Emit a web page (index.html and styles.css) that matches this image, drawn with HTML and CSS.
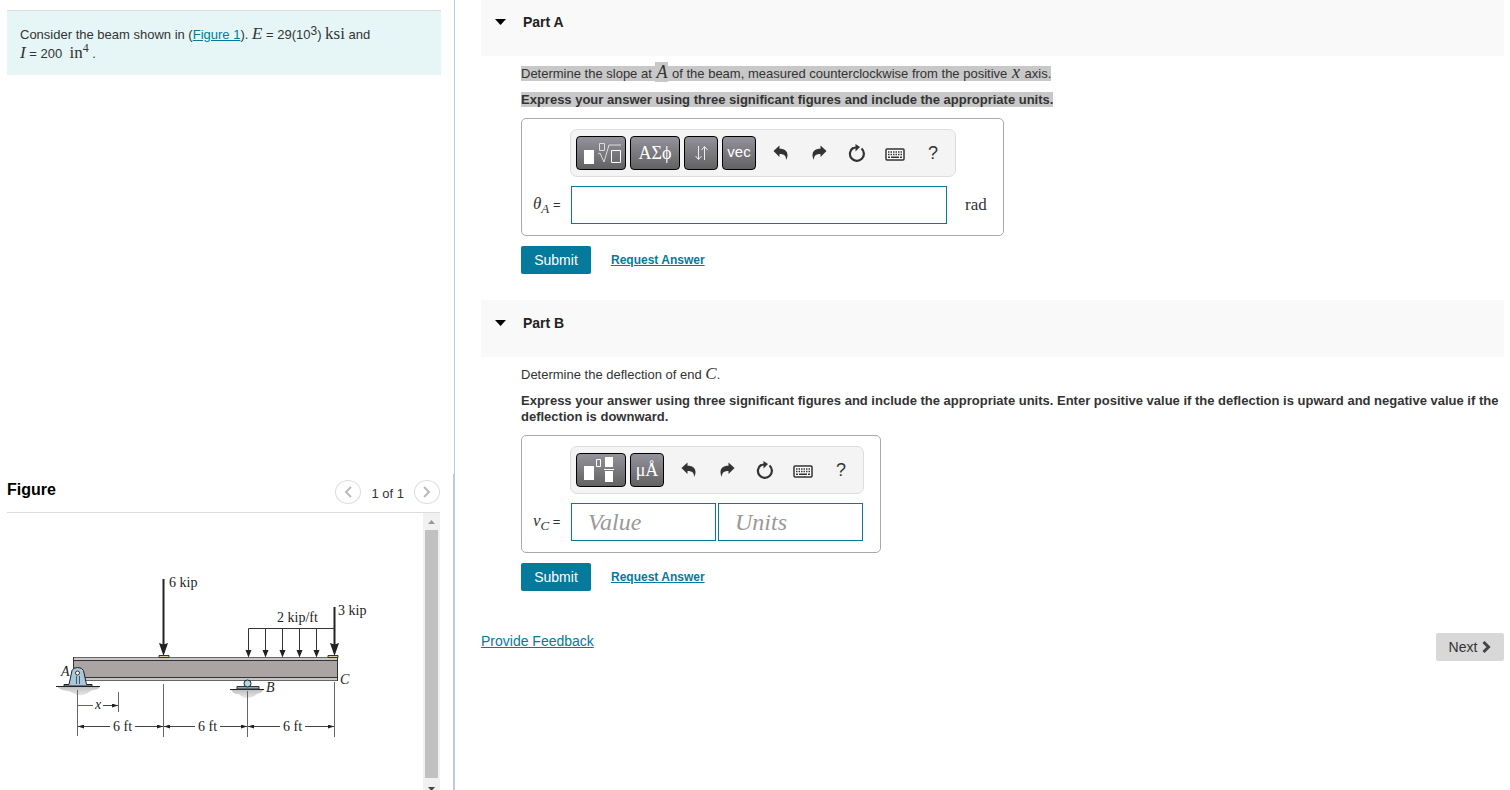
FILE: index.html
```html
<!DOCTYPE html>
<html lang="en">
<head>
  <meta charset="UTF-8">
  <meta name="viewport" content="width=device-width, initial-scale=1.0">
  <title>Beam slope and deflection</title>
  <link rel="stylesheet" href="styles.css">
</head>
<body>
  <!-- shared icons -->
  <svg class="sprite" aria-hidden="true">
    <symbol id="undo" viewBox="0 0 16 16">
      <path d="M.5 6 6.500.5v3.300c5.500 0 8 2.700 8 6.200 0 2-.6 3.500-1.500 5 .2-4-1.500-6-6.500-6v3z"/>
    </symbol>
    <symbol id="redo" viewBox="0 0 16 16">
      <path d="M15.500 6 9.500.5v3.300c-5.500 0-8 2.700-8 6.200 0 2 .6 3.500 1.500 5-.2-4 1.500-6 6.500-6v3z"/>
    </symbol>
    <symbol id="reset" viewBox="0 0 18 18">
      <path d="M13.500 4.500A7 7 0 1 1 5 4" fill="none" stroke="currentColor" stroke-width="2.200"/>
      <path d="M7.500 0 12 3 7.500 7.500V4.500L4.500 5.500 4 3.500 7.500 2.500z"/>
    </symbol>
    <symbol id="keyboard" viewBox="0 0 20 13">
      <rect x="1" y="1" width="18" height="11" rx="1" fill="#fff" stroke="currentColor" stroke-width="1.500"/>
      <path d="M3 4h14M3 6.500h14" fill="none" stroke="currentColor" stroke-width="1.500" stroke-dasharray="1.500 1"/>
      <path d="M3 9.300h2m1 0h8m1 0h2" fill="none" stroke="currentColor" stroke-width="1.500"/>
    </symbol>
  </svg>

  <div class="page">
    <aside class="sidebar">
      <div class="problem-pane">
        <div class="problem">
          Consider the beam shown in (<a href="#figure">Figure 1</a>). <i class="math">E</i> = 29(10<sup>3</sup>) <span class="math">ksi</span> and
          <br><i class="math">I</i> = 200 &nbsp;<span class="math">in<sup>4</sup></span> .
        </div>
      </div>
      <section class="figure-pane" id="figure">
        <div class="figure-header">
          <h2>Figure</h2>
          <div class="pager">
            <button type="button" aria-label="Previous figure"><svg width="8" height="12" viewBox="0 0 8 12"><path d="M7 1 2 6l5 5"/></svg></button>
            <span>1 of 1</span>
            <button type="button" aria-label="Next figure"><svg width="8" height="12" viewBox="0 0 8 12"><path d="m1 1 5 5-5 5"/></svg></button>
          </div>
        </div>
        <div class="figure-body">
          <div class="figure-view">
            <svg class="beam" width="330" height="190" viewBox="50 560 330 190" role="img" aria-label="Beam loading diagram">
              <defs>
                <marker id="tip" viewBox="0 0 6 4" markerWidth="6" markerHeight="4" refX="6" refY="2" orient="auto-start-reverse" markerUnits="userSpaceOnUse">
                  <path d="M0 0 6 2 0 4z"/>
                </marker>
                <linearGradient id="soil" x1="0" y1="0" x2="0" y2="1">
                  <stop offset="0" stop-color="#bbb"/>
                  <stop offset="1" stop-color="#e8e8e8"/>
                </linearGradient>
              </defs>

              <!-- ground under the supports -->
              <path d="M57 686h43c-1 3-4 4-7 4-4 1-5 4-10 5-5 1-8-1-12-3-5-2-11-1-14-6z" fill="url(#soil)"/>
              <path d="M231 689h33c-1 3-4 4-7 5-3 2-5 4-10 4s-6-3-9-4c-4 0-6-2-7-5z" fill="url(#soil)"/>
              <path d="M56 686.500h44M230 689.500h34" stroke="#222"/>

              <!-- beam -->
              <rect x="73" y="657" width="265" height="24" fill="#aaa4a5"/>
              <rect x="73" y="657" width="265" height="3" fill="#c8c6c7"/>
              <rect x="73" y="678" width="265" height="3" fill="#c8c6c7"/>
              <path d="M73 657.500h265M73 680.500h265" stroke="#666"/>
              <path d="M73 660.500h265M73 677.500h265M73.500 657v24M337.500 657v24" stroke="#333"/>

              <!-- pin A -->
              <path d="M64 686v-1.500h5l3-14q1-3 5.500-3t6 3l3 14H92v1.500z" fill="#a9c8dc" stroke="#222"/>
              <circle cx="77.500" cy="673" r="2" fill="#fff" stroke="#333"/>
              <path d="M76.500 676v8M79.500 676v8" stroke="#456"/>

              <!-- roller B -->
              <path d="M237 689v-2.500h22v2.500z" fill="#8ea5b3" stroke="#333"/>
              <circle cx="247.500" cy="683.500" r="3.500" fill="#b5d7ea" stroke="#222"/>

              <!-- point loads -->
              <path d="M159 655.500h10v2h-10zM328 655.500h10v2h-10z" fill="#d9d08f" stroke="#333"/>
              <path d="M163.500 579v66M334.500 607v38" stroke="#222" stroke-width="2"/>
              <path d="m159 643 4.500 1.500L168 643l-4.500 13zM330 643l4.500 1.500L339 643l-4.500 13z"/>

              <!-- distributed load -->
              <path d="M248.500 653v-24.500h86M265.500 629v24M282.500 629v24M299.500 629v24M316.500 629v24" fill="none" stroke="#333"/>
              <path d="m245.500 650 3 7.500 3-7.500zm17 0 3 7.500 3-7.500zm17 0 3 7.500 3-7.500zm17 0 3 7.500 3-7.500zm17 0 3 7.500 3-7.500z"/>

              <!-- dimensions -->
              <path d="M77.500 690v46M163.500 684v53M247.500 691v46M334.500 682v55M118.500 692v20M78 705.500h15" stroke="#666"/>
              <g stroke="#444">
                <path d="M103 705.500h15" marker-end="url(#tip)"/>
                <path d="M110 726.500H78" marker-end="url(#tip)"/>
                <path d="M135 726.500h28" marker-end="url(#tip)"/>
                <path d="M195 726.500h-31" marker-end="url(#tip)"/>
                <path d="M220 726.500h27" marker-end="url(#tip)"/>
                <path d="M280 726.500h-32" marker-end="url(#tip)"/>
                <path d="M305 726.500h29" marker-end="url(#tip)"/>
              </g>
              <text x="169" y="587">6 kip</text>
              <text x="277" y="622">2 kip/ft</text>
              <text x="338" y="615">3 kip</text>
              <text x="113" y="731">6 ft</text>
              <text x="198" y="731">6 ft</text>
              <text x="283" y="731">6 ft</text>
              <text class="it" x="61" y="676">A</text>
              <text class="it" x="266" y="692">B</text>
              <text class="it" x="340" y="684">C</text>
              <text class="it" x="95" y="709">x</text>
            </svg>
          </div>
          <div class="scrollbar">
            <svg width="7" height="4" viewBox="0 0 7 4"><path d="M0 4 3.500 0 7 4z" fill="#999"/></svg>
            <div class="thumb"></div>
            <svg width="7" height="4" viewBox="0 0 7 4"><path d="M0 0h7L3.500 4z" fill="#444"/></svg>
          </div>
        </div>
      </section>
    </aside>

    <main class="content">
      <section class="part">
        <h2 class="part-header">
          <button type="button" aria-expanded="true"><svg width="11" height="6" viewBox="0 0 11 6"><path d="M0 0h11L5.500 6z"/></svg>Part A</button>
        </h2>
        <div class="part-body">
          <p><mark>Determine the slope at <i class="math tall">A</i> of the beam, measured counterclockwise from the positive <i class="math">x</i> axis.</mark></p>
          <p><mark><b>Express your answer using three significant figures and include the appropriate units.</b></mark></p>
          <form class="answer">
            <div class="toolbar">
              <button type="button" class="key wide" aria-label="Templates">
                <svg width="40" height="26" viewBox="0 0 40 26">
                  <path d="M3 10h10v14H3z" fill="#fff"/>
                  <path d="M18.500 3.500h5v7h-5zM17 14l2-1 4 9 5-17h12" fill="none" stroke="#ddd"/>
                  <path d="M30.500 10.500h9v12h-9z" fill="none" stroke="#fff"/>
                </svg>
              </button>
              <button type="button" class="key wide greek">ΑΣϕ</button>
              <button type="button" class="key" aria-label="Arrows">
                <svg width="14" height="16" viewBox="0 0 14 16"><path d="M4.500 1v13M1.500 11l3 3.500 3-3.500M10.500 15V2M7.500 5l3-3.500 3 3.500" fill="none" stroke="#eee"/></svg>
              </button>
              <button type="button" class="key vec">vec</button>
              <div class="tools">
                <button type="button" aria-label="Undo"><svg width="16" height="16"><use href="#undo"/></svg></button>
                <button type="button" aria-label="Redo"><svg width="16" height="16"><use href="#redo"/></svg></button>
                <button type="button" aria-label="Reset"><svg width="18" height="18"><use href="#reset"/></svg></button>
                <button type="button" aria-label="Keyboard"><svg class="kbd" width="20" height="13"><use href="#keyboard"/></svg></button>
                <button type="button" aria-label="Help">?</button>
              </div>
            </div>
            <div class="entry">
              <label for="theta"><i class="math">θ<sub>A</sub></i> =</label>
              <input type="text" id="theta" class="long">
              <span class="math unit">rad</span>
            </div>
          </form>
          <div class="actions">
            <button type="button" class="submit">Submit</button>
            <a href="#">Request Answer</a>
          </div>
        </div>
      </section>

      <section class="part">
        <h2 class="part-header">
          <button type="button" aria-expanded="true"><svg width="11" height="6" viewBox="0 0 11 6"><path d="M0 0h11L5.500 6z"/></svg>Part B</button>
        </h2>
        <div class="part-body">
          <p>Determine the deflection of end <i class="math">C</i>.</p>
          <p><b>Express your answer using three significant figures and include the appropriate units. Enter positive value if the deflection is upward and negative value if the deflection is downward.</b></p>
          <form class="answer">
            <div class="toolbar">
              <button type="button" class="key wide" aria-label="Templates">
                <svg width="40" height="26" viewBox="0 0 40 26">
                  <path d="M3 9h10v14H3zM24 0h8v10h-8zM24 14h8v11h-8z" fill="#fff"/>
                  <path d="M15.500 2.500h4v7h-4zM23 12.500h10" fill="none" stroke="#fff"/>
                </svg>
              </button>
              <button type="button" class="key greek">μÅ</button>
              <div class="tools">
                <button type="button" aria-label="Undo"><svg width="16" height="16"><use href="#undo"/></svg></button>
                <button type="button" aria-label="Redo"><svg width="16" height="16"><use href="#redo"/></svg></button>
                <button type="button" aria-label="Reset"><svg width="18" height="18"><use href="#reset"/></svg></button>
                <button type="button" aria-label="Keyboard"><svg class="kbd" width="20" height="13"><use href="#keyboard"/></svg></button>
                <button type="button" aria-label="Help">?</button>
              </div>
            </div>
            <div class="entry">
              <label for="vc"><i class="math">v<sub>C</sub></i> =</label>
              <input type="text" id="vc" placeholder="Value">
              <input type="text" placeholder="Units" aria-label="Units">
            </div>
          </form>
          <div class="actions">
            <button type="button" class="submit">Submit</button>
            <a href="#">Request Answer</a>
          </div>
        </div>
      </section>

      <div class="bottom">
        <a href="#">Provide Feedback</a>
        <button type="button" class="next">Next <svg width="9" height="12" viewBox="0 0 9 12"><path d="m1.500 1 5 5-5 5" fill="none" stroke="#444" stroke-width="3"/></svg></button>
      </div>
    </main>
  </div>
</body>
</html>
```
FILE: styles.css
```css
* {
  box-sizing: border-box;
}
body {
  margin: 0;
  font-family: "Liberation Sans", Arial, sans-serif;
  font-size: 13px;
  line-height: 16px;
  color: #333;
  background: #fff;
}
button, input {
  font-family: inherit;
  margin: 0;
}
button {
  border: 0;
  padding: 0;
  background: none;
  color: inherit;
  cursor: pointer;
}
a {
  color: #047a9c;
}
h2, p {
  margin: 0;
}
svg {
  display: block;
}
.sprite {
  display: none;
}
.math {
  font-family: "Liberation Serif", "Times New Roman", serif;
  font-size: 17px;
  line-height: 0;
}
sup, sub {
  line-height: 0;
}
.page {
  display: flex;
  height: 100vh;
  overflow: hidden;
}

/* left column */
.sidebar {
  display: flex;
  flex-direction: column;
  flex: none;
  width: 30%;
  min-width: 455px;
}
.problem-pane {
  flex: 1;
  padding: 10px 13px 0 7px;
  border-right: 1px solid #b8cbdf;
}
.problem {
  padding: 14px 13px 12px;
  border-top: 1px solid #ddd;
  background: #e6f6f6;
  line-height: 19px;
}
.problem sup {
  font-size: 12px;
  vertical-align: 4px;
}
.problem .math sup {
  vertical-align: 6px;
}
.figure-pane {
  display: flex;
  flex-direction: column;
  height: 40%;
  padding: 0 13px 0 7px;
  border-right: 2px solid #b8cbdf;
}
.figure-header {
  display: flex;
  flex: none;
  justify-content: space-between;
  height: 39px;
  padding-top: 6px;
  border-bottom: 1px solid #ddd;
}
.figure-header h2 {
  font-size: 16px;
  line-height: 20px;
  color: #000;
}
.pager {
  display: flex;
  align-items: flex-start;
  gap: 10px;
}
.pager span {
  line-height: 28px;
}
.pager button {
  display: flex;
  align-items: center;
  justify-content: center;
  width: 26px;
  height: 24px;
  border: 1px solid #ddd;
  border-radius: 50%;
}
.pager path {
  fill: none;
  stroke: #bbb;
  stroke-width: 2;
}
.figure-body {
  display: flex;
  flex: 1;
  min-height: 0;
}
.figure-view {
  flex: 1;
  overflow: hidden;
  padding: 47px 0 0 43px;
}
.beam {
  font-family: "Liberation Serif", "Times New Roman", serif;
  font-size: 14px;
  fill: #222;
}
.beam .it {
  font-style: italic;
}
.scrollbar {
  display: flex;
  flex-direction: column;
  align-items: center;
  width: 17px;
  padding-top: 7px;
  overflow: hidden;
  background: #f1f1f1;
}
.scrollbar svg {
  flex: none;
}
.thumb {
  flex: none;
  width: 13px;
  height: 92%;
  margin: 6px 0 9px;
  background: #c1c1c1;
}

/* right column */
.content {
  flex: 1;
  min-width: 0;
  padding: 0 6px 0 26px;
}
.part {
  padding-bottom: 26px;
}
.part-header {
  padding: 15px 14px 26px;
  background: #f9f9f9;
  font-size: 14px;
  line-height: 16px;
}
.part:first-child .part-header {
  padding-top: 14px;
}
.part-header button {
  display: flex;
  align-items: center;
  gap: 17px;
  font-size: 14px;
  font-weight: bold;
  line-height: 16px;
  color: #222;
}
.part-body {
  padding: 10px 0 0 40px;
}
.part-body p {
  margin-bottom: 10px;
}
mark {
  background: #c8c8c8;
  color: inherit;
}
mark .math {
  padding: 0 1px;
  font-size: 18px;
}
mark .tall {
  background: #c8c8c8;
}
.answer {
  width: fit-content;
  padding: 10px 16px 11px 0;
  border: 1px solid #aaa;
  border-radius: 5px;
}
.toolbar {
  display: flex;
  align-items: center;
  gap: 4px;
  width: fit-content;
  height: 48px;
  margin: 0 0 9px 48px;
  padding: 0 3px 0 5px;
  border: 1px solid #ddd;
  border-radius: 7px;
  background: #f4f4f4;
}
.key {
  display: flex;
  align-items: center;
  justify-content: center;
  width: 34px;
  height: 34px;
  border: 1px solid #000;
  border-radius: 4px;
  background: linear-gradient(#94929b, #626262);
  color: #fff;
}
.key.wide {
  width: 50px;
}
.greek {
  font-family: "Liberation Serif", "Times New Roman", serif;
  font-size: 18px;
}
.vec {
  padding-bottom: 4px;
  font-size: 15px;
}
.tools {
  display: flex;
  margin-left: 2px;
}
.tools button {
  display: flex;
  align-items: center;
  justify-content: center;
  width: 38px;
  height: 34px;
  font-size: 18px;
  color: #333;
  fill: currentColor;
}
.kbd {
  margin-top: 3px;
}
.entry {
  display: flex;
  align-items: center;
}
.entry label {
  width: 49px;
  padding-left: 11px;
  white-space: nowrap;
}
.entry sub {
  font-size: 13px;
}
.entry input {
  width: 145px;
  height: 38px;
  padding: 0 16px;
  border: 1px solid #047a9c;
  border-radius: 0;
  font-family: "Liberation Serif", "Times New Roman", serif;
  font-size: 24px;
}
.entry .long {
  width: 376px;
}
.entry input + input {
  margin-left: 2px;
}
.entry ::placeholder {
  color: #999;
  font-style: italic;
  opacity: 1;
}
.unit {
  margin-left: 18px;
}
.actions {
  display: flex;
  align-items: center;
  gap: 20px;
  margin-top: 10px;
  font-size: 12px;
  font-weight: bold;
}
.submit {
  width: 70px;
  height: 28px;
  border-radius: 2px;
  background: #047a9c;
  color: #fff;
  font-size: 14px;
}
.bottom {
  display: flex;
  justify-content: space-between;
  padding-top: 16px;
  font-size: 14px;
}
.next {
  display: flex;
  align-items: center;
  justify-content: center;
  gap: 5px;
  width: 68px;
  height: 28px;
  border-radius: 2px;
  background: #d8d8d8;
  font-size: 14px;
}
```
